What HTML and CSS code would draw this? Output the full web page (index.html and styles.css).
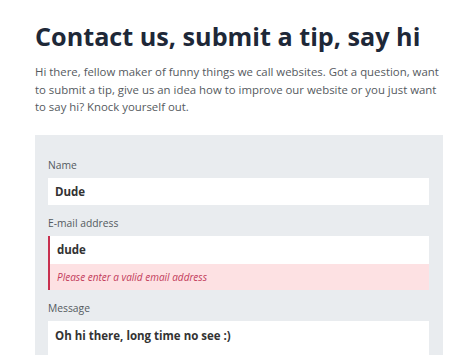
FILE: index.html
```html
<!DOCTYPE html>
<html lang="en">
<head>
<meta charset="utf-8">
<link rel="stylesheet" href="styles.css">
</head>
<body>
<main class="page">
  <h1 class="title">Contact us, submit a tip, say hi</h1>
  <p class="intro">Hi there, fellow maker of funny things we call websites. Got a question, want to submit a tip, give us an idea how to improve our website or you just want to say hi? Knock yourself out.</p>
  <form class="form">
    <div class="field">
      <label class="label">Name</label>
      <div class="input">Dude</div>
    </div>
    <div class="field">
      <label class="label">E-mail address</label>
      <div class="invalid">
        <div class="input">dude</div>
        <div class="error">Please enter a valid email address</div>
      </div>
    </div>
    <div class="field">
      <label class="label">Message</label>
      <div class="input textarea">Oh hi there, long time no see :)</div>
    </div>
  </form>
</main>
</body>
</html>
```
FILE: styles.css
```css
html, body {
  margin: 0;
  padding: 0;
  background: #fff;
  overflow: hidden;
}
body {
  font-family: "Open Sans", "DejaVu Sans", sans-serif;
}
.page {
  width: 408px;
  padding: 19px 0 0 35px;
}
.title {
  margin: 0;
  font-size: 25.2px;
  line-height: 34px;
  font-weight: 700;
  color: #1e2838;
  white-space: nowrap;
}
.intro {
  margin: 10px 0 0;
  font-size: 11.4px;
  line-height: 17.5px;
  color: #555a60;
}
.form {
  margin-top: 19.5px;
  background: #e9ecef;
  padding: 22px 14px 20px 13px;
  display: flex;
  flex-direction: column;
  gap: 10px;
}
.field {
  display: flex;
  flex-direction: column;
  gap: 5px;
}
.label {
  font-size: 10.3px;
  line-height: 16px;
  color: #545a60;
}
.input {
  background: #fff;
  height: 27px;
  line-height: 27px;
  padding: 0 7px;
  font-size: 11.5px;
  font-weight: 700;
  color: #333;
}
.textarea {
  height: 60px;
  line-height: 30px;
}
.invalid {
  border-left: 2px solid #c8304f;
}
.invalid .input {
  height: 28px;
  line-height: 28px;
}
.error {
  background: #fde1e3;
  height: 26px;
  line-height: 26px;
  padding: 0 7px;
  font-size: 10px;
  font-style: italic;
  color: #c23a5a;
}
```
